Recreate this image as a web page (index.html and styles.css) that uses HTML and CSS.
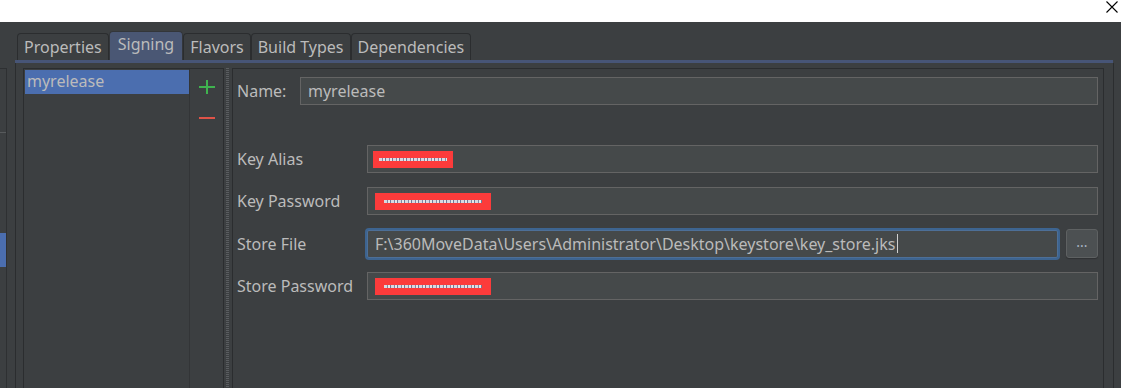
FILE: index.html
```html
<!DOCTYPE html>
<html lang="en">
<head>
    <meta charset="UTF-8">
    <title>Project Structure - Signing</title>
    <link rel="stylesheet" href="styles.css">
</head>
<body>
    <div class="topbar">
        <svg class="close" width="12" height="12" viewBox="0 0 12 12">
            <path d="M0.5 0.5 L11.5 11.5 M11.5 0.5 L0.5 11.5" stroke="#000" stroke-width="1.1" fill="none"/>
        </svg>
    </div>

    <div class="workspace">
        <div class="stub">
            <div class="stub-line"></div>
            <div class="stub-sel"></div>
        </div>

        <div class="pane">
            <div class="tabs">
                <div class="tab">Properties</div>
                <div class="tab active">Signing</div>
                <div class="tab">Flavors</div>
                <div class="tab">Build Types</div>
                <div class="tab">Dependencies</div>
            </div>
            <div class="strip"></div>

            <div class="pane-body">
                <div class="list-frame">
                    <div class="list">
                        <div class="list-item selected">myrelease</div>
                    </div>
                    <div class="toolbar">
                        <svg width="16" height="16" viewBox="0 0 16 16">
                            <rect x="0" y="7" width="16" height="2" fill="#3fb34f"/>
                            <rect x="7" y="1" width="2" height="14" fill="#3fb34f"/>
                        </svg>
                        <svg width="16" height="16" viewBox="0 0 16 16">
                            <rect x="0" y="7" width="16" height="2" fill="#df5348"/>
                        </svg>
                    </div>
                </div>

                <div class="splitter"><div class="dots"></div></div>

                <div class="form-panel">
                    <div class="name-row">
                        <label class="name-label">Name:</label>
                        <div class="field">myrelease</div>
                    </div>

                    <div class="rows">
                        <div class="row">
                            <label class="row-label">Key Alias</label>
                            <div class="field"><span class="redact redact-alias"><span class="scribble"></span></span></div>
                        </div>
                        <div class="row">
                            <label class="row-label">Key Password</label>
                            <div class="field"><span class="redact redact-pass"><span class="scribble"></span></span></div>
                        </div>
                        <div class="row">
                            <label class="row-label">Store File</label>
                            <div class="field focused">F:\360MoveData\Users\Administrator\Desktop\keystore\key_store.jks<span class="caret"></span></div>
                            <button class="browse">...</button>
                        </div>
                        <div class="row">
                            <label class="row-label">Store Password</label>
                            <div class="field"><span class="redact redact-pass"><span class="scribble"></span></span></div>
                        </div>
                    </div>
                </div>
            </div>
        </div>
    </div>
</body>
</html>
```

FILE: styles.css
```css
body {
    margin: 0;
    width: 1121px;
    height: 388px;
    overflow: hidden;
    background: #3c3f41;
    font-family: 'Noto Sans', 'Open Sans', sans-serif;
    font-size: 16px;
    color: #bbbbbb;
}

.topbar {
    height: 22px;
    background: #fff;
    display: flex;
    justify-content: flex-end;
    align-items: flex-start;
}

.close {
    margin: 1px 3px 0 0;
}

.workspace {
    display: flex;
    height: 366px;
}

/* left neighbour panel, mostly cut off */
.stub {
    width: 6px;
    margin-top: 46px;
    border-top: 1px solid #2e3032;
    border-right: 1px solid #2e3032;
}

.stub-line {
    height: 1px;
    margin-top: 63px;
    background: #575a5c;
}

.stub-sel {
    height: 34px;
    margin-top: 100px;
    background: #4b6eaf;
}

.pane {
    width: 1099px;
    margin-left: 8px;
    display: flex;
    flex-direction: column;
}

.tabs {
    height: 38px;
    display: flex;
    align-items: flex-end;
    padding-left: 2px;
}

.tab {
    box-sizing: border-box;
    height: 27px;
    padding: 0 6px;
    border: 1px solid #2b2d2f;
    border-bottom: none;
    border-radius: 4px 4px 0 0;
    line-height: 26px;
    white-space: nowrap;
}

.tab.active {
    height: 29px;
    padding: 0 8px;
    line-height: 25px;
    background: #4a5774;
    border-color: #33363a;
}

.strip {
    height: 3px;
    margin-right: 1px;
    background: #475577;
}

.pane-body {
    flex: 1;
    display: flex;
    padding: 5px 9px 0 7px;
    border-left: 1px solid #2b2d2f;
    border-right: 1px solid #2b2d2f;
}

.list-frame {
    width: 199px;
    display: flex;
    border: 1px solid #2b2d2f;
    border-bottom: none;
}

.list {
    flex: 1;
    padding: 1px 0 0 1px;
    border-right: 1px solid #333537;
}

.list-item {
    height: 24px;
    line-height: 23px;
    padding-left: 2px;
}

.list-item.selected {
    background: #4b6eaf;
}

.toolbar {
    width: 33px;
    padding-top: 10px;
    display: flex;
    flex-direction: column;
    align-items: center;
    gap: 15px;
}

.splitter {
    width: 8px;
    display: flex;
    justify-content: center;
}

.dots {
    width: 3px;
    margin-left: -1px;
    background: repeating-linear-gradient(to bottom, #5a5d60 0 1px, #3c3f41 1px 2px);
}

.form-panel {
    flex: 1;
    padding: 8px 5px 0 4px;
    border: 1px solid #2b2d2f;
    border-bottom: none;
}

.name-row {
    display: flex;
    align-items: center;
}

.name-label {
    width: 63px;
}

.field {
    flex: 1;
    box-sizing: border-box;
    height: 28px;
    padding: 0 7px;
    display: flex;
    align-items: center;
    background: #45494a;
    border: 1px solid #646464;
    white-space: nowrap;
    overflow: hidden;
}

.rows {
    margin-top: 40px;
    display: flex;
    flex-direction: column;
    gap: 14px;
}

.row {
    display: flex;
    align-items: center;
}

.row-label {
    width: 130px;
}

.row .field {
    padding-left: 5px;
}

.field.focused {
    padding-left: 7px;
    border-color: #4d6f97;
    border-radius: 2px;
    box-shadow: 0 0 0 2px #3d6490;
}

.caret {
    width: 1px;
    height: 19px;
    margin-left: 2px;
    background: #d0d0d0;
}

.browse {
    box-sizing: border-box;
    width: 32px;
    height: 29px;
    margin-left: 8px;
    padding: 0 0 4px;
    background: #4c5052;
    border: 1px solid #5e6162;
    border-radius: 3px;
    box-shadow: 0 1px 1px #2f3133;
    color: #a7b4c4;
    font-family: inherit;
    font-size: 14px;
    line-height: 20px;
}

.redact {
    height: 17px;
    display: flex;
    align-items: center;
    justify-content: center;
    background: #fc3b3b;
}

.redact-alias {
    width: 80px;
}

.redact-pass {
    width: 116px;
    margin-left: 2px;
}

.scribble {
    width: 85%;
    height: 3px;
    background: repeating-linear-gradient(90deg, #d8d8e0 0 3px, #8088a8 3px 4px, #e6e6e6 4px 6px, #6f7898 6px 7px);
}
```
